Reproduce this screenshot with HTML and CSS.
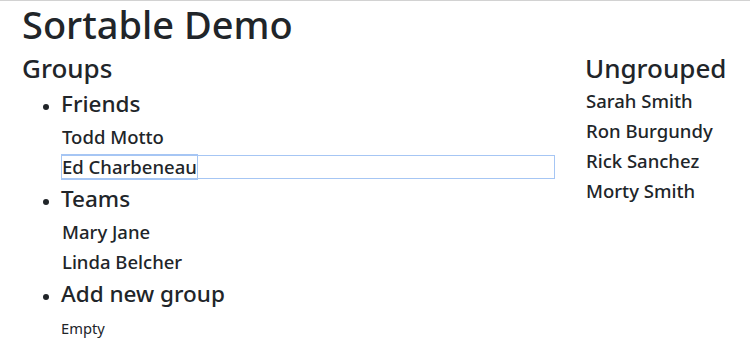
FILE: index.html
```html
<!DOCTYPE html>
<html lang="en">
<head>
    <meta charset="UTF-8">
    <meta name="viewport" content="width=device-width, initial-scale=1.0">
    <title>Sortable Demo</title>
    <link rel="stylesheet" href="styles.css">
</head>
<body>
    <div class="page">
        <h1>Sortable Demo</h1>
        <div class="row">
            <div class="col-groups">
                <h3>Groups</h3>
                <ul class="group-list">
                    <li>
                        <div class="group-name">Friends</div>
                        <div class="item">Todd Motto</div>
                        <div class="item dragging"><span class="ghost">Ed Charbeneau</span></div>
                    </li>
                    <li>
                        <div class="group-name">Teams</div>
                        <div class="item">Mary Jane</div>
                        <div class="item">Linda Belcher</div>
                    </li>
                    <li>
                        <div class="group-name">Add new group</div>
                        <div class="empty">Empty</div>
                    </li>
                </ul>
            </div>
            <div class="col-ungrouped">
                <h3 class="ungrouped-title">Ungrouped</h3>
                <div class="item">Sarah Smith</div>
                <div class="item">Ron Burgundy</div>
                <div class="item">Rick Sanchez</div>
                <div class="item">Morty Smith</div>
            </div>
        </div>
    </div>
</body>
</html>
```

FILE: styles.css
```css
body {
    margin: 0;
    font-family: "Noto Sans", "Open Sans", sans-serif;
    color: #212529;
    background: #fff;
    border-top: 1px solid #d2d2d2;
}

.page {
    padding: 0 22px;
}

h1 {
    margin: 0;
    font-size: 38px;
    font-weight: 500;
    line-height: 46px;
}

.row {
    display: flex;
    gap: 30px;
    padding-top: 6px;
}

.col-groups {
    width: 533px;
}

.col-ungrouped {
    flex: 1;
}

h3 {
    margin: 0;
    font-size: 26px;
    font-weight: 500;
    line-height: 30px;
}

.ungrouped-title {
    margin-bottom: 6px;
}

.group-list {
    margin: 5px 0 0;
    padding-left: 39px;
}

.group-name {
    font-size: 22.5px;
    font-weight: 500;
    line-height: 32px;
    margin: 2px 0 5px;
}

.item {
    font-size: 18.5px;
    font-weight: 500;
    line-height: 22px;
    margin: 0 0 6px;
    border: 1px solid transparent;
}

.group-list .item:last-child {
    margin-bottom: 4px;
}

.dragging {
    border-color: #a6c6f4;
}

.ghost {
    display: inline-block;
    margin: -2px 0 -2px -1px;
    padding: 1px 0;
    border: 1px solid #a6c6f4;
}

.empty {
    margin-top: -2px;
    font-size: 14.7px;
    line-height: 30px;
}
```
